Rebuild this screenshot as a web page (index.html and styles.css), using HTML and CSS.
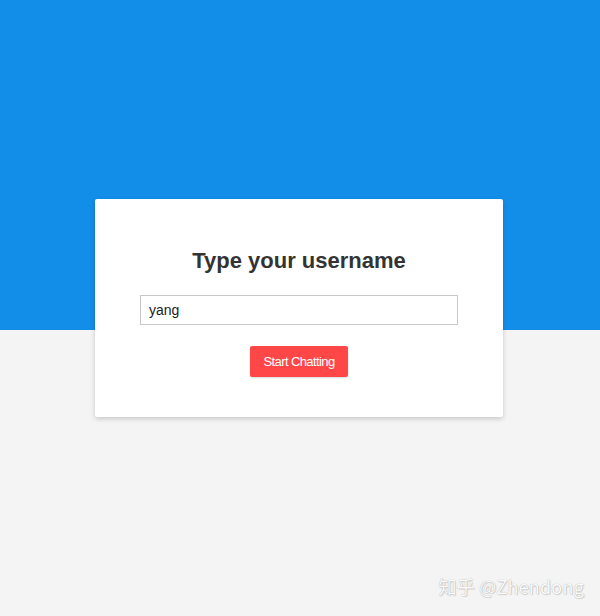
FILE: index.html
```html
<!DOCTYPE html>
<html>
<head>
<meta charset="utf-8">
<link rel="stylesheet" href="styles.css">
</head>
<body>
<div class="page">
  <div class="top"></div>
  <div class="bottom"></div>
  <div class="card-layer">
    <form class="card">
      <h2 class="title">Type your username</h2>
      <input class="name" type="text" value="yang">
      <button class="start" type="button">Start Chatting</button>
    </form>
  </div>
  <div class="mark">知乎 @Zhendong</div>
</div>
</body>
</html>
```
FILE: styles.css
```css
html, body {
  margin: 0;
  padding: 0;
}
body {
  font-family: "Liberation Sans", Arial, sans-serif;
}
.page {
  position: relative;
  width: 600px;
  height: 616px;
  overflow: hidden;
  display: flex;
  flex-direction: column;
}
.top {
  height: 330px;
  background: #128ee9;
}
.bottom {
  flex: 1;
  background: #f4f4f4;
}
.card-layer {
  position: absolute;
  left: 0;
  right: 2px;
  top: 199px;
  display: flex;
  justify-content: center;
}
.card {
  width: 408px;
  box-sizing: border-box;
  background: #fff;
  padding: 49px 45px 40px;
  display: flex;
  flex-direction: column;
  align-items: center;
  box-shadow: 0 2px 5px rgba(0,0,0,0.18);
  border-radius: 2px;
}
.title {
  margin: 0;
  font-size: 22px;
  line-height: 26px;
  font-weight: bold;
  color: #333;
}
.name {
  margin: 21px 0 0;
  width: 100%;
  height: 30px;
  box-sizing: border-box;
  border: 1px solid #c8c8c8;
  padding: 0 8px;
  font-family: "Liberation Sans", Arial, sans-serif;
  font-size: 14px;
  color: #222;
  outline: none;
}
.start {
  margin-top: 21px;
  width: 98px;
  height: 31px;
  border: none;
  border-radius: 2px;
  background: #ff4747;
  color: #fff;
  font-family: "Liberation Sans", Arial, sans-serif;
  font-size: 13px;
  letter-spacing: -0.6px;
  padding: 0;
  box-shadow: 0 1px 2px rgba(0,0,0,0.15);
}
.mark {
  position: absolute;
  right: 16px;
  bottom: 17px;
  font-family: "Noto Sans CJK SC", "Noto Sans", sans-serif;
  font-size: 18px;
  color: #fbfbfb;
  text-shadow: 0 0 1px rgba(0,0,0,0.35), 1px 1px 1px rgba(0,0,0,0.12);
  letter-spacing: 0.2px;
}
```
